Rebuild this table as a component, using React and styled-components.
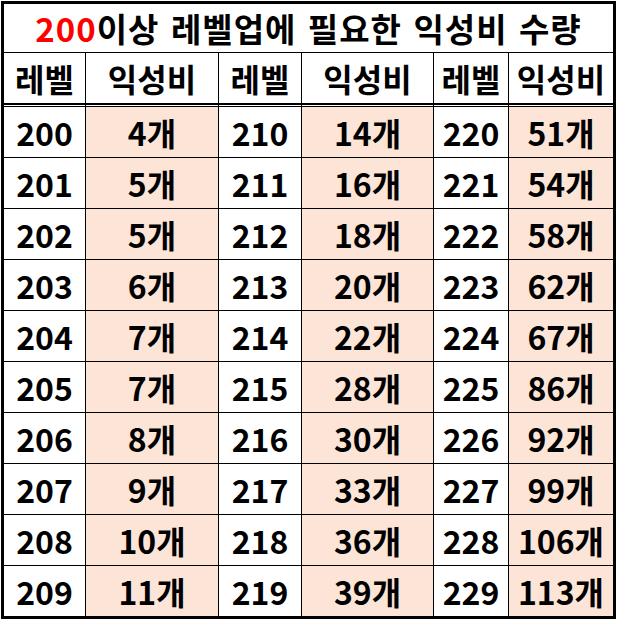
import React from "react";
import styled, { createGlobalStyle } from "styled-components";

const levels = [
  [200, 4], [201, 5], [202, 5], [203, 6], [204, 7],
  [205, 7], [206, 8], [207, 9], [208, 10], [209, 11],
  [210, 14], [211, 16], [212, 18], [213, 20], [214, 22],
  [215, 28], [216, 30], [217, 33], [218, 36], [219, 39],
  [220, 51], [221, 54], [222, 58], [223, 62], [224, 67],
  [225, 86], [226, 92], [227, 99], [228, 106], [229, 113],
];

const GlobalStyle = createGlobalStyle`
  html, body {
    margin: 0;
    background: #fff;
  }
`;

const Page = styled.div`
  padding: 1px 0 0 1px;
`;

const Sheet = styled.div`
  display: inline-grid;
  grid-template-columns: 81px 132px 82px 131px 74px 104px;
  grid-template-rows: 48px 53px repeat(10, 50px);
  gap: 1px;
  background: #000;
  border: 3px solid #000;
  font-family: "Noto Sans CJK KR", "Noto Sans", sans-serif;
  font-weight: 700;
  color: #000;
`;

const Cell = styled.div`
  display: flex;
  align-items: center;
  justify-content: center;
  background: ${(props) => (props.$shade ? "#fce4d6" : "#fff")};
  font-size: 32px;
  line-height: 1;
  white-space: nowrap;
`;

const TitleCell = styled(Cell)`
  grid-column: 1 / -1;
  font-size: 33px;
  letter-spacing: 1px;
  word-spacing: 3px;
  padding-top: 1px;
`;

const Red = styled.span`
  color: #ff0000;
`;

// 머리행 아래 이중선
const HeadCell = styled(Cell)`
  padding-bottom: 3px;
  box-shadow: inset 0 -1px 0 #fff, inset 0 -3px 0 #000;
`;

const App = () => {
  const rows = levels.slice(0, 10).map((_, i) => [
    levels[i],
    levels[i + 10],
    levels[i + 20],
  ]);

  return (
    <Page>
      <GlobalStyle />
      <Sheet>
        <TitleCell>
          <Red>200</Red>이상 레벨업에 필요한 익성비 수량
        </TitleCell>
        {[0, 1, 2].map((n) => (
          <React.Fragment key={n}>
            <HeadCell>레벨</HeadCell>
            <HeadCell>익성비</HeadCell>
          </React.Fragment>
        ))}
        {rows.map((row) =>
          row.map(([level, count]) => (
            <React.Fragment key={level}>
              <Cell>{level}</Cell>
              <Cell $shade>{count}개</Cell>
            </React.Fragment>
          ))
        )}
      </Sheet>
    </Page>
  );
};

export default App;
